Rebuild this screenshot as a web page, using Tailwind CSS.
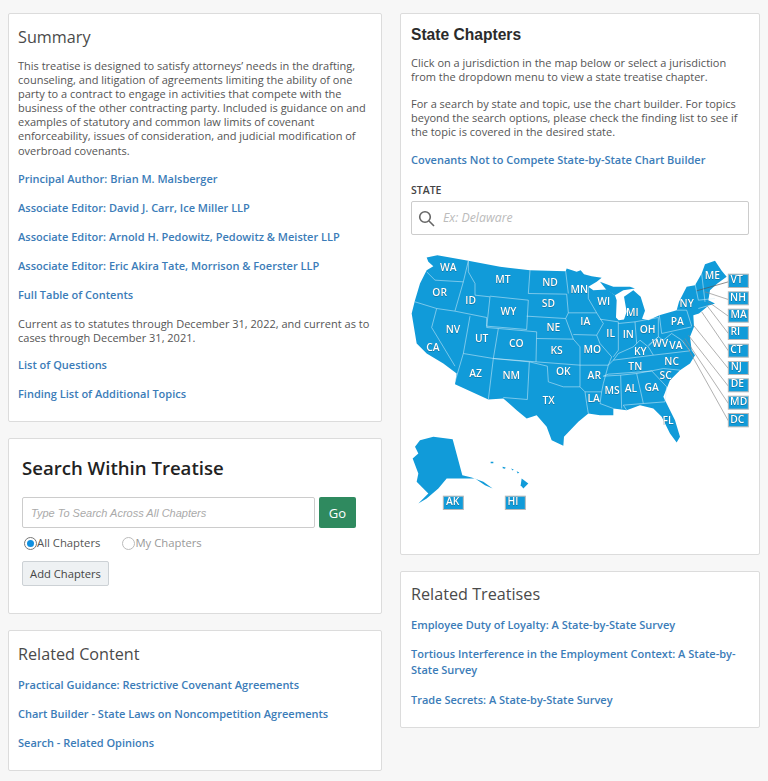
<!DOCTYPE html>
<html lang="en">
<head>
  <meta charset="UTF-8">
  <title>Covenants Not to Compete</title>
  <script src="https://cdn.jsdelivr.net/npm/@tailwindcss/browser@4"></script>
</head>
<body class="bg-[#f7f7f7] font-['Open_Sans',sans-serif] text-[11px] leading-[14px] text-[#555]">
  <div class="h-[781px] overflow-hidden pt-[13px] pl-[8px] flex items-start gap-[18px]">

    <!-- Left column -->
    <div class="w-[374px] flex flex-col gap-[16px]">
      <!-- Summary -->
      <section class="h-[409px] bg-white border border-[#dcdcdc] rounded-[2px] pt-[12px] px-[9px]">
        <h2 class="text-[16.2px] leading-[22px] font-medium text-[#4a4a4a]">Summary</h2>
        <p class="mt-[11px] leading-[14.1px]">This treatise is designed to satisfy attorneys’ needs in the drafting, counseling, and litigation of agreements limiting the ability of one party to a contract to engage in activities that compete with the business of the other contracting party. Included is guidance on and examples of statutory and common law limits of covenant enforceability, issues of consideration, and judicial modification of overbroad covenants.</p>
        <a href="#" class="block mt-[14.3px] font-semibold text-[#3b7cb8]">Principal Author: Brian M. Malsberger</a>
        <a href="#" class="block mt-[15px] font-semibold text-[#3b7cb8]">Associate Editor: David J. Carr, Ice Miller LLP</a>
        <a href="#" class="block mt-[15px] font-semibold text-[#3b7cb8]">Associate Editor: Arnold H. Pedowitz, Pedowitz &amp; Meister LLP</a>
        <a href="#" class="block mt-[15px] font-semibold text-[#3b7cb8]">Associate Editor: Eric Akira Tate, Morrison &amp; Foerster LLP</a>
        <a href="#" class="block mt-[15px] font-semibold text-[#3b7cb8]">Full Table of Contents</a>
        <p class="mt-[15px]">Current as to statutes through December 31, 2022, and current as to cases through December 31, 2021.</p>
        <a href="#" class="block mt-[13px] font-semibold text-[#3b7cb8]">List of Questions</a>
        <a href="#" class="block mt-[15px] font-semibold text-[#3b7cb8]">Finding List of Additional Topics</a>
      </section>

      <!-- Search -->
      <section class="h-[176px] bg-white border border-[#dcdcdc] rounded-[2px] pt-[16px] px-[13px]">
        <h2 class="text-[18.6px] leading-[25px] font-semibold text-[#222]">Search Within Treatise</h2>
        <div class="mt-[17px] flex gap-[4px]">
          <div class="w-[293px] h-[31px] border border-[#ccc] rounded-[2px] flex items-center px-[8px] font-['Liberation_Sans',sans-serif] italic text-[#aaa] text-[11px]">Type To Search Across All Chapters</div>
          <button class="w-[37px] h-[31px] bg-[#2f8a5f] text-white text-[13px] rounded-[2px]">Go</button>
        </div>
        <div class="mt-[8px] flex items-center pl-[2px]">
          <span class="w-[13px] h-[13px] rounded-full border-[1.5px] border-[#777] flex items-center justify-center"><span class="w-[7px] h-[7px] rounded-full bg-[#0f8fe0]"></span></span>
          <span class="text-[#555] text-[11.3px]">All Chapters</span>
          <span class="ml-[22px] w-[13px] h-[13px] rounded-full border border-[#bbb]"></span>
          <span class="text-[#999] text-[11.3px]">My Chapters</span>
        </div>
        <button class="mt-[11px] block w-[87px] h-[25px] bg-[#eef1f3] border border-[#ccd1d5] rounded-[2px] text-[11.2px] text-[#444]">Add Chapters</button>
      </section>

      <!-- Related Content -->
      <section class="h-[141px] bg-white border border-[#dcdcdc] rounded-[2px] pt-[12px] px-[9px]">
        <h2 class="text-[16.2px] leading-[22px] font-medium text-[#4a4a4a]">Related Content</h2>
        <a href="#" class="block mt-[13px] font-semibold text-[#3b7cb8]">Practical Guidance: Restrictive Covenant Agreements</a>
        <a href="#" class="block mt-[15px] font-semibold text-[#3b7cb8]">Chart Builder - State Laws on Noncompetition Agreements</a>
        <a href="#" class="block mt-[15px] font-semibold text-[#3b7cb8]">Search - Related Opinions</a>
      </section>
    </div>

    <!-- Right column -->
    <div class="w-[360px] flex flex-col gap-[16px]">
      <!-- State Chapters -->
      <section class="h-[542px] bg-white border border-[#dcdcdc] rounded-[2px] pt-[11px] px-[10px]">
        <h2 class="font-['Liberation_Sans',sans-serif] text-[15.6px] leading-[20px] font-bold text-[#2b2b2b]">State Chapters</h2>
        <p class="mt-[11px]">Click on a jurisdiction in the map below or select a jurisdiction from the dropdown menu to view a state treatise chapter.</p>
        <p class="mt-[13px]">For a search by state and topic, use the chart builder. For topics beyond the search options, please check the finding list to see if the topic is covered in the desired state.</p>
        <a href="#" class="block mt-[14px] font-semibold text-[#3b7cb8]">Covenants Not to Compete State-by-State Chart Builder</a>
        <div class="mt-[16px] text-[10.5px] font-semibold text-[#444]">STATE</div>
        <div class="mt-[4px] h-[34px] border border-[#ccc] rounded-[2px] flex items-center pl-[6px] gap-[8px]">
          <svg class="w-[17px] h-[17px]" viewBox="0 0 17 17" fill="none" stroke="#666" stroke-width="1.6"><circle cx="7" cy="7" r="5.3"/><path d="M11 11l5 5"/></svg>
          <span class="italic text-[#bbb] text-[12.3px]">Ex: Delaware</span>
        </div>

        <!-- Map -->
        <svg class="mt-[15px] block w-[340px] h-[262px]" viewBox="33 30 1020 785">
          <g fill="#119bd9">
            <path d="M80 52L112 45L205 62L300 80L390 90L497 93L500 85L530 95L542 90L552 102L575 108L605 113L590 125L565 140L580 150L620 148L645 165L650 180L648 232L656 240L672 238L680 215L672 170L700 150L722 170L735 212L726 236L745 240L778 225L830 210L837 185L860 140L885 135L905 100L915 72L945 62L965 92L980 110L952 130L930 150L925 180L945 190L925 197L897 220L880 225L882 260L870 290L875 330L885 345L870 370L840 390L810 420L790 470L800 490L825 540L840 590L830 607L810 580L785 530L760 505L720 495L680 510L640 505L640 525L600 525L565 520L535 545L492 590L490 617L455 600L440 560L410 525L380 535L350 510L310 475L265 478L165 432L170 400L130 370L80 340L50 310L35 220L45 180L60 130L80 90L100 78L85 65Z"/>
            <path d="M60 600L100 590L158 597L187 705L215 712L250 725L278 745L255 735L225 715L190 715L140 715L115 745L80 775L55 790L85 760L70 745L50 725L55 700L38 655L55 640L45 620Z"/>
            <path d="M365 715L385 730L370 745L362 735Z"/>
            <path d="M272 665l8 0l0 4l-8 0ZM308 680l9 2l-2 4l-7 -2ZM333 685l8 3l-3 3ZM350 693l8 4l-5 3Z"/>
            <path d="M600 125L640 140L690 140L705 145L670 150L645 165L620 150Z"/>
          </g>
          <!-- state borders -->
          <g fill="none" stroke="#d5eefa" stroke-width="1.6">
            <path d="M80 95L105 120L190 125M205 62L190 125L165 212M45 185L110 205L165 213L260 232M110 205L95 262L165 378M210 228L190 340L165 425"/>
            <path d="M205 62L205 95L225 130L225 165L270 170L260 262L295 265L280 355L265 478M270 168L385 180L380 268M260 232L260 258L380 268M295 265L410 275L408 365L280 355M190 340L280 355L388 365L382 478L310 472"/>
            <path d="M388 365L442 378L445 425L490 440L540 440L555 455M410 295L520 297L540 320L540 375L408 365M380 228L497 235L520 297M385 160L500 162L505 218L497 235M390 90L385 160M497 93L505 160M505 218L590 218L610 250L590 285L520 283M565 140L565 175L590 218"/>
            <path d="M590 285L600 310L635 350L625 375L540 375L540 440M625 375L610 430L605 455L555 455L560 490L565 520M605 455L600 490L640 505M610 408L662 405L665 505M662 405L710 400L730 490L670 495L680 510M710 400L755 392L800 440L795 485L730 490"/>
            <path d="M750 393L790 385L840 390M625 402L610 408M625 402L750 393M640 360L760 345L870 332M625 375L640 360L655 340L700 320L720 300L745 320L760 345M600 237L655 245L655 330L640 350M655 250L705 245L710 310M705 245L775 232L775 290L745 315M778 225L785 280L875 260M830 210L860 210L875 258"/>
            <path d="M745 318L775 290L790 300L815 280L845 300L870 332M885 130L895 180M905 100L915 185M895 180L945 175M895 205L930 195"/>
          </g>
          <!-- leader lines -->
          <g fill="none" stroke="#8a8a8a" stroke-width="2">
            <path stroke="#555" d="M890 152L985 125"/>
            <path d="M915 155L985 178M925 185L985 228M920 195L985 280M905 215L985 332M880 255L985 385M865 285L985 438M855 295L985 490M850 300L985 542"/>
          </g>
          <!-- boxes for the small states -->
          <g fill="#119bd9" stroke="#b9b9b9" stroke-width="3">
            <rect x="985" y="102" width="60" height="40"/><rect x="985" y="155" width="60" height="39"/><rect x="985" y="207" width="60" height="39"/>
            <rect x="985" y="259" width="60" height="39"/><rect x="985" y="312" width="60" height="39"/><rect x="985" y="364" width="60" height="39"/>
            <rect x="985" y="416" width="60" height="39"/><rect x="985" y="468" width="60" height="39"/><rect x="985" y="520" width="60" height="40"/>
            <rect x="130" y="768" width="60" height="40"/><rect x="316" y="768" width="60" height="40"/>
          </g>
          <g fill="#fff" text-anchor="middle" font-size="31" font-weight="600" class="drop-shadow-[0_1px_1px_rgba(0,0,0,0.55)]">
            <text x="145" y="92">WA</text><text x="119" y="167">OR</text><text x="212" y="192">ID</text><text x="309" y="129">MT</text><text x="325" y="225">WY</text><text x="450" y="138">ND</text><text x="445" y="202">SD</text><text x="538" y="159">MN</text><text x="611" y="195">WI</text><text x="697" y="228">MI</text>
            <text x="937" y="118">ME</text><text x="860" y="201">NY</text><text x="832" y="254">PA</text><text x="159" y="279">NV</text><text x="99" y="333">CA</text><text x="245" y="306">UT</text><text x="349" y="322">CO</text><text x="460" y="272">NE</text><text x="556" y="256">IA</text><text x="470" y="341">KS</text>
            <text x="577" y="339">MO</text><text x="632" y="292">IL</text><text x="685" y="294">IN</text><text x="743" y="279">OH</text><text x="721" y="345">KY</text><text x="780" y="321">WV</text><text x="828" y="326">VA</text><text x="815" y="376">NC</text><text x="706" y="390">TN</text><text x="797" y="418">SC</text>
            <text x="227" y="411">AZ</text><text x="334" y="418">NM</text><text x="490" y="405">OK</text><text x="583" y="416">AR</text><text x="446" y="491">TX</text><text x="581" y="485">LA</text><text x="636" y="461">MS</text><text x="693" y="456">AL</text><text x="755" y="453">GA</text><text x="804" y="552">FL</text>
            <text x="1010" y="130">VT</text><text x="1014" y="182">NH</text><text x="1016" y="233">MA</text><text x="1006" y="285">RI</text><text x="1009" y="339">CT</text><text x="1009" y="391">NJ</text><text x="1012" y="442">DE</text><text x="1016" y="496">MD</text><text x="1012" y="548">DC</text>
            <text x="158" y="796">AK</text><text x="339" y="796">HI</text>
          </g>
        </svg>
      </section>

      <!-- Related Treatises -->
      <section class="h-[157px] bg-white border border-[#dcdcdc] rounded-[2px] pt-[11px] px-[10px]">
        <h2 class="text-[16.2px] leading-[22px] font-medium text-[#4a4a4a]">Related Treatises</h2>
        <a href="#" class="block mt-[13px] font-semibold text-[#3b7cb8]">Employee Duty of Loyalty: A State-by-State Survey</a>
        <a href="#" class="block mt-[14px] leading-[16px] font-semibold text-[#3b7cb8]">Tortious Interference in the Employment Context: A State-by-State Survey</a>
        <a href="#" class="block mt-[15px] font-semibold text-[#3b7cb8]">Trade Secrets: A State-by-State Survey</a>
      </section>
    </div>
  </div>
</body>
</html>
